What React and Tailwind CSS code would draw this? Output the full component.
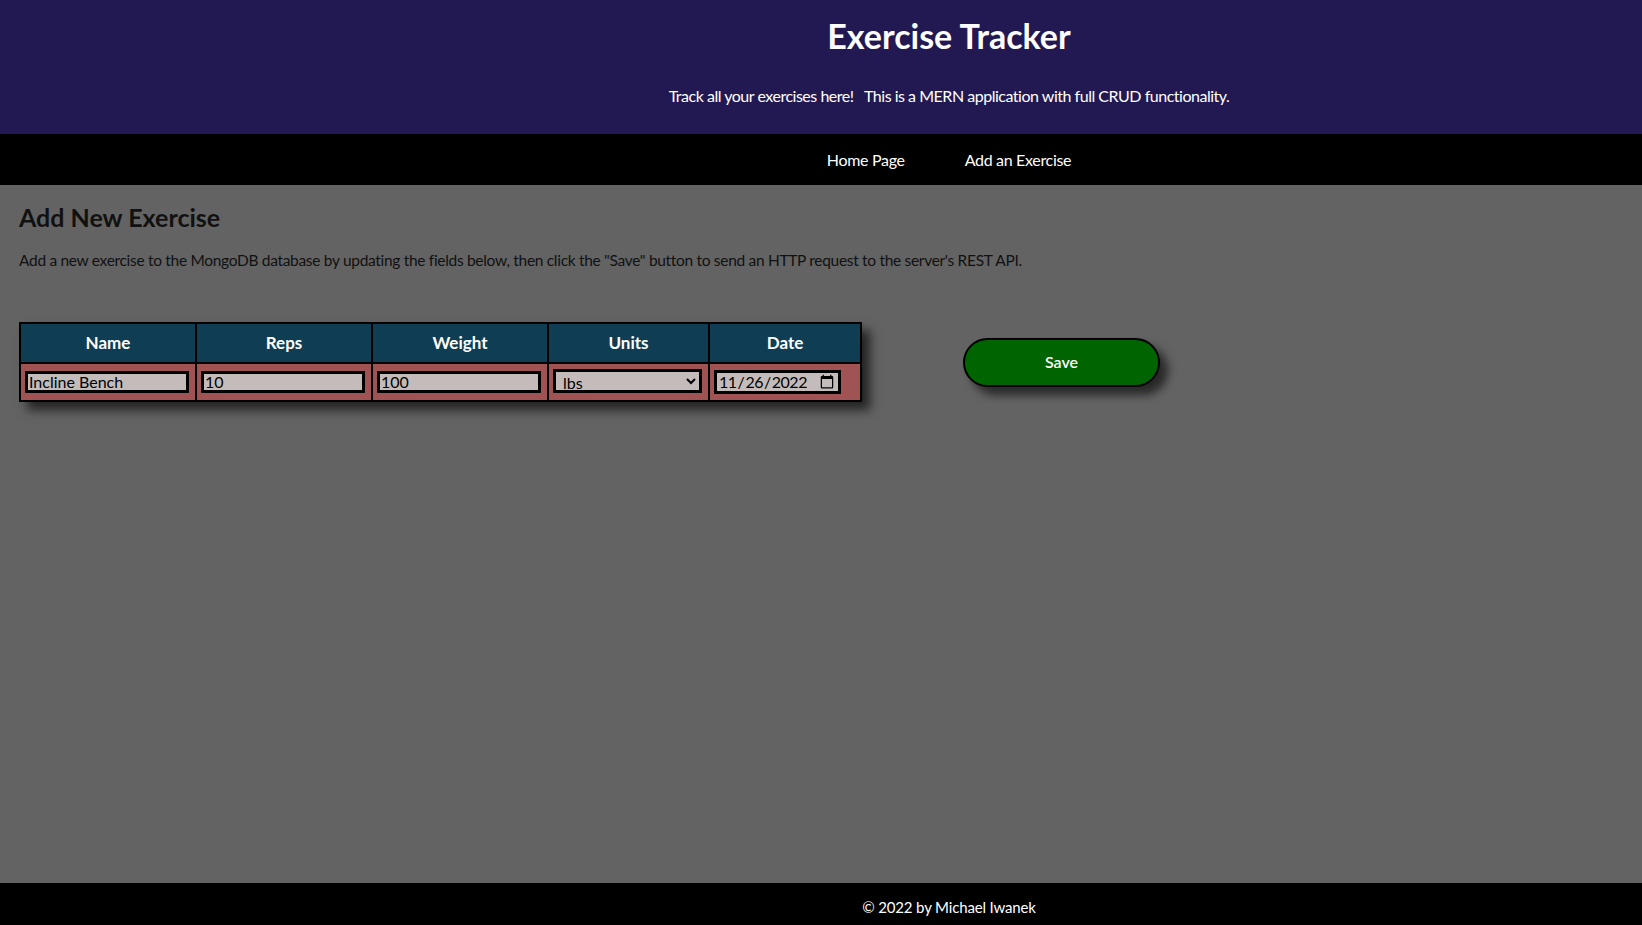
import React, { useState } from 'react';

const font = { fontFamily: 'Lato, "Open Sans", sans-serif' };

const columns = [
  { label: 'Name', width: 'w-[176px]' },
  { label: 'Reps', width: 'w-[176px]' },
  { label: 'Weight', width: 'w-[176px]' },
  { label: 'Units', width: 'w-[161px]' },
  { label: 'Date', width: 'w-[152px]' },
];

const inputClass =
  'h-[22px] border-[3px] border-black bg-[#c4bcbb] px-[1px] text-[16px] leading-none text-black outline-none';

const App = () => {
  const [exercise, setExercise] = useState({
    name: 'Incline Bench',
    reps: '10',
    weight: '100',
    unit: 'lbs',
    date: '2022-11-26',
  });

  const handleChange = (e) => setExercise({ ...exercise, [e.target.name]: e.target.value });

  return (
    <div className="min-h-screen flex flex-col bg-[#636363]" style={font}>
      <header className="h-[134px] bg-[#221952] text-white pl-[256px] text-center">
        <h1 className="mt-[16px] h-[40px] leading-[40px] text-[34px] font-bold">Exercise Tracker</h1>
        <p className="mt-[28px] h-[24px] leading-[24px] text-[16px] tracking-[-0.03em]">
          Track all your exercises here!&nbsp;&nbsp; This is a MERN application with full CRUD functionality.
        </p>
      </header>

      <nav className="h-[51px] bg-black text-white flex items-center justify-center gap-[60px] pl-[256px] text-[16px] tracking-[-0.02em]">
        <a href="#" className="text-white">Home Page</a>
        <a href="#" className="text-white">Add an Exercise</a>
      </nav>

      <main className="flex-1 px-[19px]">
        <h2 className="mt-[17px] h-[30px] leading-[30px] text-[25px] font-bold text-[#111]">Add New Exercise</h2>
        <p className="mt-[16px] h-[24px] leading-[24px] text-[15.5px] text-[#111] tracking-[-0.02em]">
          Add a new exercise to the MongoDB database by updating the fields below, then click the "Save" button to send an HTTP request to the server's REST API.
        </p>

        <div className="mt-[50px] flex items-center gap-[101px]">
          <table className="border-collapse border-2 border-black shadow-[8px_8px_10px_rgba(0,0,0,0.65)]">
            <thead>
              <tr className="bg-[#0f3d53]">
                {columns.map((c) => (
                  <th
                    key={c.label}
                    className={`${c.width} h-[40px] border-2 border-black text-white text-[17px] font-bold text-center`}
                  >
                    {c.label}
                  </th>
                ))}
              </tr>
            </thead>
            <tbody>
              <tr className="bg-[#a15252]">
                <td className="h-[38px] border-2 border-black px-[4px]">
                  <input name="name" value={exercise.name} onChange={handleChange} className={`${inputClass} w-[164px]`} />
                </td>
                <td className="h-[38px] border-2 border-black px-[4px]">
                  <input name="reps" value={exercise.reps} onChange={handleChange} className={`${inputClass} w-[164px]`} />
                </td>
                <td className="h-[38px] border-2 border-black px-[4px]">
                  <input name="weight" value={exercise.weight} onChange={handleChange} className={`${inputClass} w-[164px]`} />
                </td>
                <td className="h-[38px] border-2 border-black px-[4px]">
                  <select
                    name="unit"
                    value={exercise.unit}
                    onChange={handleChange}
                    className="w-[149px] h-[24px] border-[3px] border-black bg-[#c4bcbb] pl-[3px] py-0 text-[16px] leading-[16px] text-black outline-none"
                  >
                    <option value="lbs">lbs</option>
                    <option value="kgs">kgs</option>
                  </select>
                </td>
                <td className="h-[38px] border-2 border-black px-[4px]">
                  <input
                    type="date"
                    name="date"
                    value={exercise.date}
                    onChange={handleChange}
                    className="w-[127px] h-[24px] border-[3px] border-black bg-[#c4bcbb] px-[1px] text-[16px] leading-none text-black tracking-[-0.03em] outline-none"
                  />
                </td>
              </tr>
            </tbody>
          </table>

          <button className="w-[197px] h-[49px] rounded-full border-2 border-black bg-[#006400] text-white text-[16px] font-semibold shadow-[8px_8px_10px_rgba(0,0,0,0.6)]">
            Save
          </button>
        </div>
      </main>

      <footer className="h-[42px] bg-black text-white flex items-center justify-center pl-[256px] pt-[6px] text-[15px] tracking-[-0.01em]">
        © 2022 by Michael Iwanek
      </footer>
    </div>
  );
};

export default App;
